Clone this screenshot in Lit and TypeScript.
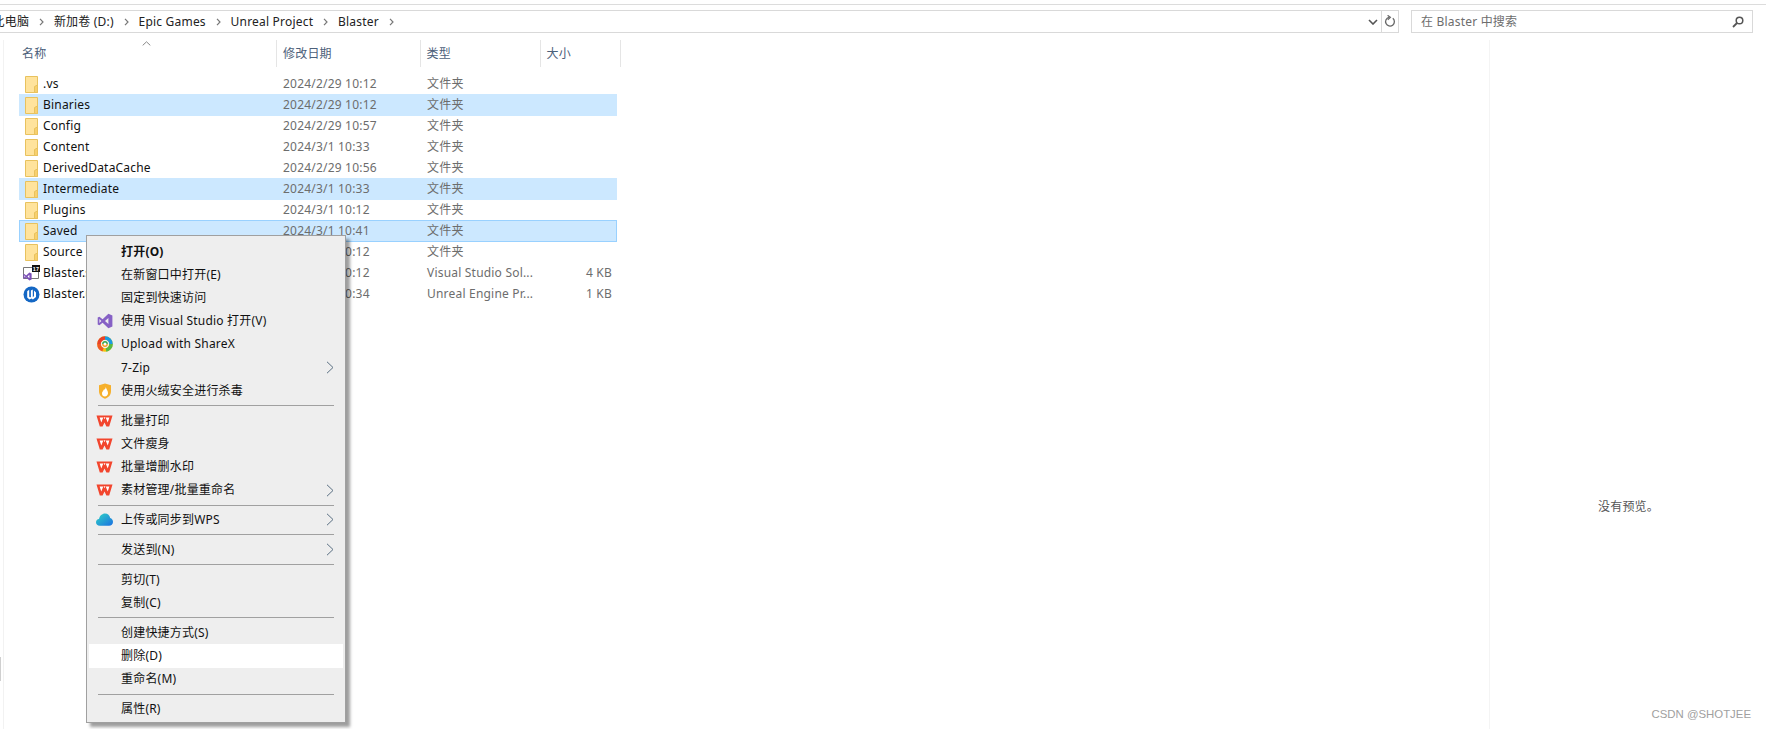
import { LitElement, html, css } from "lit";
import { customElement } from "lit/decorators.js";

const folder = html`<svg class="ficon" width="14" height="17" viewBox="0 0 14 17"><path d="M.5.5H12.5V16.5H.5Z" fill="#ffe39c" stroke="#e8c25e"/><path d="M9.5 10.5L12.5 9V16.5H9.5Z" fill="#f8d06e" stroke="#e8c25e"/></svg>`;
const vsPath = "M11.4 .8L15.4 2.6V13.4L11.4 15.2L5.6 9.8L2.4 12.3L.7 11.4V4.6L2.4 3.7L5.6 6.2ZM11.4 5L8 8L11.4 11ZM2.4 6V10L4.4 8Z";
const slnIcon = html`<svg class="ficon fileicon" width="17" height="16" viewBox="0 0 17 16"><path d="M.5 2.5H15.5V13.5H.5Z" fill="#fff" stroke="#777"/><rect x="9" y="0" width="8" height="7" fill="#111"/><text x="13" y="5.6" font-size="5.5" font-weight="700" fill="#fff" text-anchor="middle" font-family="Liberation Sans, sans-serif">17</text><path transform="translate(0 7) scale(.56)" d="${vsPath}" fill="#7b4fb8" fill-rule="evenodd"/></svg>`;
const ueIcon = html`<svg class="ficon fileicon" width="17" height="17" viewBox="0 0 17 17"><circle cx="8.5" cy="8.5" r="8" fill="#1467c4"/><path d="M4.2 5.2L6.2 3.8V10.6C6.2 11.4 7.3 11.6 7.9 11V4.6L9.8 3.4V10.9L11 10.2V4.6L13 6.6V11L9.9 13.6L8.6 12.6L6.4 13.6L4.2 11.6Z" fill="#fff"/></svg>`;

const icons: Record<string, unknown> = {
  vs: html`<svg width="16" height="16" viewBox="0 0 16 16"><path d="${vsPath}" fill="#8661c5" fill-rule="evenodd"/></svg>`,
  sharex: html`<svg width="16" height="16" viewBox="0 0 16 16" fill="none">
    <circle cx="8" cy="8" r="6" stroke="#f4c20d" stroke-width="3.6"/>
    <path d="M2 8A6 6 0 0 1 8 2" stroke="#e8412b" stroke-width="3.6"/>
    <path d="M8 2A6 6 0 0 1 14 8" stroke="#1a9be2" stroke-width="3.6"/>
    <path d="M14 8A6 6 0 0 1 9 14" stroke="#57b947" stroke-width="3.6"/>
    <path d="M2 8A6 6 0 0 0 6 13.7" stroke="#ef5a24" stroke-width="3.6"/>
    <circle cx="8" cy="8" r="3.2" fill="#fff"/>
    <path d="M5.8 8A2.2 2.2 0 0 1 10.2 8" stroke="#35a64b" stroke-width="1.4"/>
    <path d="M10.2 8A2.2 2.2 0 0 1 5.8 8" stroke="#f29a1f" stroke-width="1.4"/></svg>`,
  huorong: html`<svg width="16" height="16" viewBox="0 0 16 16"><path d="M2 2.2L8 .5L14 2.2V8C14 12 11.5 14.5 8 15.7C4.5 14.5 2 12 2 8Z" fill="#f6b02c"/><path d="M8.8 4C9.3 6.5 11.3 7.8 11 10.5C10.7 12.6 9.2 13.5 8 13.5C6.2 13.5 5 12.2 5 10.5C5 8.8 6.3 8.3 6.6 6.8C7.5 7 8.6 5.8 8.8 4Z" fill="#fff"/></svg>`,
  wps: html`<svg width="17" height="12" viewBox="0 0 17 12"><path d="M.5.5H16.5L13.2 11.5H10.4L8.5 7.5L6.6 11.5H3.8Z" fill="#f2452d"/><path d="M3.6 2.6H7.3L5.3 7.4ZM9.7 2.6H13.4L11.7 7.4Z" fill="#fff"/><path d="M7.6 2.2H9.4L8.5 4.2Z" fill="#fff"/></svg>`,
  cloud: html`<svg width="17" height="13" viewBox="0 0 17 13"><defs><linearGradient id="cg" x1="0" y1="0" x2="1" y2="1"><stop offset="0" stop-color="#2ed6c4"/><stop offset="1" stop-color="#1c6fe2"/></linearGradient></defs><path d="M3.8 12.8C1.6 12.8 0 11.3 0 9.3C0 7.5 1.3 6.2 3 6C3.6 2.6 6.2.4 9 .4C11.8.4 13.8 2.4 14.2 5C15.9 5.6 17 7 17 8.9C17 11.1 15.3 12.8 13 12.8Z" fill="url(#cg)"/></svg>`,
};

type Row = { n: string; d: string; t: string; s?: string; sel?: boolean; focus?: boolean; icon?: unknown };
const rows: Row[] = [
  { n: ".vs", d: "2024/2/29 10:12", t: "文件夹" },
  { n: "Binaries", d: "2024/2/29 10:12", t: "文件夹", sel: true },
  { n: "Config", d: "2024/2/29 10:57", t: "文件夹" },
  { n: "Content", d: "2024/3/1 10:33", t: "文件夹" },
  { n: "DerivedDataCache", d: "2024/2/29 10:56", t: "文件夹" },
  { n: "Intermediate", d: "2024/3/1 10:33", t: "文件夹", sel: true },
  { n: "Plugins", d: "2024/3/1 10:12", t: "文件夹" },
  { n: "Saved", d: "2024/3/1 10:41", t: "文件夹", sel: true, focus: true },
  { n: "Source", d: "2024/3/1 10:12", t: "文件夹" },
  { n: "Blaster.sln", d: "2024/3/1 10:12", t: "Visual Studio Sol...", s: "4 KB", icon: slnIcon },
  { n: "Blaster.uproject", d: "2024/3/1 10:34", t: "Unreal Engine Pr...", s: "1 KB", icon: ueIcon },
];

type Item = { t: string; i?: string; sub?: boolean; b?: boolean; hot?: boolean } | null;
const menu: Item[] = [
  { t: "打开(O)", b: true },
  { t: "在新窗口中打开(E)" },
  { t: "固定到快速访问" },
  { t: "使用 Visual Studio 打开(V)", i: "vs" },
  { t: "Upload with ShareX", i: "sharex" },
  { t: "7-Zip", sub: true },
  { t: "使用火绒安全进行杀毒", i: "huorong" },
  null,
  { t: "批量打印", i: "wps" },
  { t: "文件瘦身", i: "wps" },
  { t: "批量增删水印", i: "wps" },
  { t: "素材管理/批量重命名", i: "wps", sub: true },
  null,
  { t: "上传或同步到WPS", i: "cloud", sub: true },
  null,
  { t: "发送到(N)", sub: true },
  null,
  { t: "剪切(T)" },
  { t: "复制(C)" },
  null,
  { t: "创建快捷方式(S)" },
  { t: "删除(D)", hot: true },
  { t: "重命名(M)" },
  null,
  { t: "属性(R)" },
];

const crumbs = ["此电脑", "新加卷 (D:)", "Epic Games", "Unreal Project", "Blaster"];
const chev = html`<svg class="crumbchev" width="5" height="8" viewBox="0 0 5 8" fill="none"><path d="M1 .8L4 4L1 7.2" stroke="#777" stroke-width="1.2"/></svg>`;

@customElement("app-root")
export class AppRoot extends LitElement {
  static styles = css`
    :host { display: block; }
    .root { position: relative; width: 1766px; height: 729px; overflow: hidden; background: #fff;
      font: 12px/16px "Noto Sans", "Noto Sans CJK SC", sans-serif; letter-spacing: .2px; color: #1a1a1a; display: flex; flex-direction: column; }
    .topline { height: 1px; background: #dcdcdc; margin-top: 4px; flex: none; }
    .bar { display: flex; height: 23px; margin-top: 5px; flex: none; }
    .addr { width: 1399px; box-sizing: border-box; border: 1px solid #d9d9d9; border-left: 0; display: flex; align-items: center; overflow: hidden; }
    .crumbs { display: flex; align-items: center; gap: 9.9px; margin-left: -7.5px; flex: 1; white-space: nowrap; color: #222; }
    .crumbchev { flex: none; }
    .drop { width: 17px; height: 100%; display: flex; align-items: center; justify-content: center; border-right: 1px solid #d9d9d9; box-sizing: content-box; }
    .refresh { width: 16px; display: flex; align-items: center; justify-content: center; }
    .search { width: 342px; box-sizing: border-box; margin-left: 12px; border: 1px solid #d9d9d9; display: flex; align-items: center; padding: 0 8px 0 9px; justify-content: space-between; color: #6d6d6d; }
    .main { flex: 1; display: flex; margin-top: 7px; min-height: 0; }
    .list { width: 1485px; margin-left: 3px; border-left: 1px solid #f2f2f2; flex: none; }
    .head { display: flex; height: 27px; position: relative; color: #4c607a; }
    .hc { box-sizing: border-box; border-right: 1px solid #e5e5e5; padding: 6px 0 0 6px; flex: none; }
    .caret { position: absolute; left: 138px; top: 1px; }
    .rows { margin: 6px 0 0 15px; width: 598px; }
    .row { display: grid; grid-template-columns: 263px 144px 120px 1fr; height: 22px; margin-bottom: -1px; box-sizing: border-box; border: 1px solid transparent; align-items: center; color: #6d6d6d; }
    .row.sel { background: #cce8ff; }
    .row.focus { border-color: #99d1ff; }
    .name { display: flex; align-items: center; gap: 4px; padding-left: 5px; color: #111; white-space: nowrap; }
    .ficon { flex: none; }
    .fileicon { margin: 0 -1px 0 -2px; }
    .size { text-align: right; padding-right: 4px; }
    .pane { flex: 1; border-left: 1px solid #f4f4f4; padding: 459px 0 0 108px; color: #555; }
    .tick { position: absolute; left: 0; top: 657px; width: 1px; height: 24px; background: #cfcfcf; }
    .mark { position: absolute; right: 15px; top: 707px; font: 11.4px/14px "Liberation Sans", sans-serif; letter-spacing: 0; color: #a0a0a0; }
    .menu { position: absolute; left: 86px; top: 235px; width: 260px; height: 488px; box-sizing: border-box; background: #eee; border: 1px solid #a0a0a0; box-shadow: 4px 4px 3px rgba(0,0,0,.38); padding: 4px 2px; color: #111; }
    .item { height: 23.2px; display: flex; align-items: center; position: relative; padding-left: 32px; white-space: nowrap; }
    .item.b { font-weight: 700; }
    .item.hot { background: #fff; }
    .ico { position: absolute; left: 7px; top: 3px; width: 17px; height: 17px; display: flex; align-items: center; justify-content: center; }
    .sub { position: absolute; right: 9px; top: 5px; }
    .sep { height: 1px; background: #a0a0a0; margin: 2.85px 9px; }
  `;

  render() {
    return html`<div class="root">
      <div class="topline"></div>
      <div class="bar">
        <div class="addr">
          <div class="crumbs">${crumbs.map((c) => html`<span>${c}</span>${chev}`)}</div>
          <div class="drop"><svg width="10" height="6" viewBox="0 0 10 6" fill="none"><path d="M1 1L5 5L9 1" stroke="#555" stroke-width="1.6"/></svg></div>
          <div class="refresh"><svg width="12" height="13" viewBox="0 0 12 13" fill="none"><path d="M5 2.4A4.4 4.4 0 1 0 8.8 3.3" stroke="#666" stroke-width="1.3"/><path d="M3.6 .3L6.4 2.4L3.8 4.8" stroke="#666" stroke-width="1.2"/></svg></div>
        </div>
        <div class="search">
          <span>在 Blaster 中搜索</span>
          <svg width="12" height="12" viewBox="0 0 12 12" fill="none"><circle cx="7.5" cy="4.5" r="3.3" stroke="#555" stroke-width="1.5"/><path d="M5 7L1 11" stroke="#555" stroke-width="1.8"/></svg>
        </div>
      </div>
      <div class="main">
        <div class="list">
          <div class="head">
            <svg class="caret" width="9" height="5" viewBox="0 0 9 5" fill="none"><path d="M.7 4.4L4.5 .8L8.3 4.4" stroke="#888"/></svg>
            <div class="hc" style="width:273px;padding-left:18px">名称</div>
            <div class="hc" style="width:143.5px">修改日期</div>
            <div class="hc" style="width:120px">类型</div>
            <div class="hc" style="width:80px">大小</div>
          </div>
          <div class="rows">
            ${rows.map((r) => html`<div class="row ${r.sel ? "sel" : ""} ${r.focus ? "focus" : ""}">
              <div class="name">${r.icon ?? folder}<span>${r.n}</span></div>
              <div>${r.d}</div><div>${r.t}</div><div class="size">${r.s ?? ""}</div>
            </div>`)}
          </div>
        </div>
        <div class="pane">没有预览。</div>
      </div>
      <div class="tick"></div>
      <div class="menu">
        ${menu.map((m) => m === null ? html`<div class="sep"></div>` : html`<div class="item ${m.b ? "b" : ""} ${m.hot ? "hot" : ""}">
          ${m.i ? html`<span class="ico">${icons[m.i]}</span>` : ""}
          <span>${m.t}</span>
          ${m.sub ? html`<svg class="sub" width="8" height="13" viewBox="0 0 8 13" fill="none"><path d="M1 .8L7 6.5L1 12.2" stroke="#5b7083" stroke-width="1"/></svg>` : ""}
        </div>`)}
      </div>
      <div class="mark">CSDN @SHOTJEE</div>
    </div>`;
  }
}
